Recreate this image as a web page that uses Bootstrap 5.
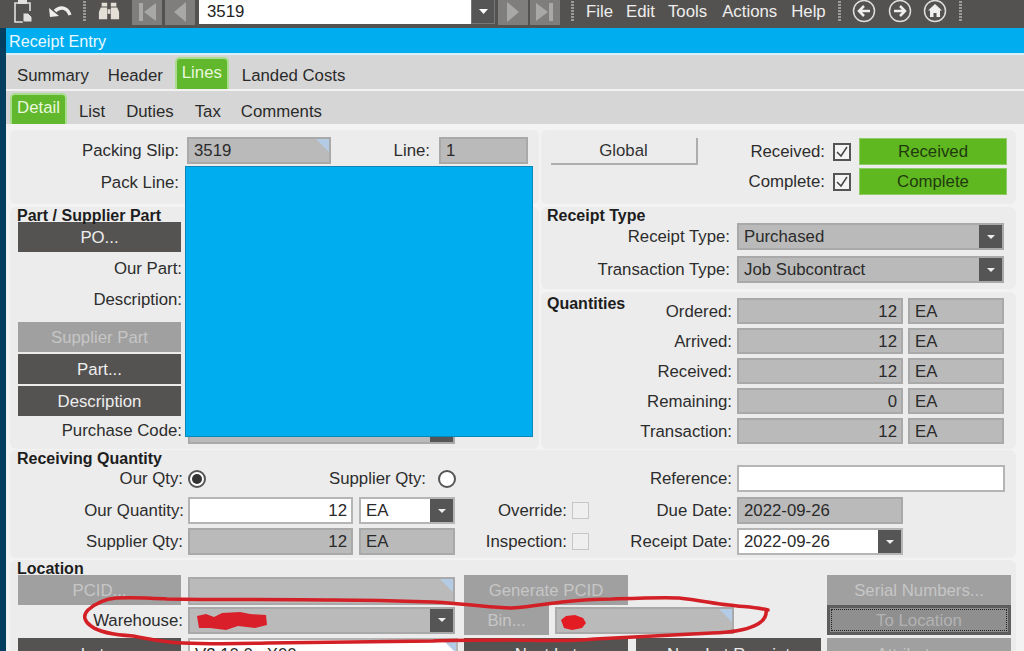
<!DOCTYPE html>
<html lang="en">
  <head>
    <meta charset="UTF-8" />
    <meta name="viewport" content="width=device-width, initial-scale=1.0" />
    <title>Receipt Entry</title>
    <link href="https://cdn.jsdelivr.net/npm/bootstrap@5.3.0/dist/css/bootstrap.min.css" rel="stylesheet" />
    <style>
      html, body { margin: 0; overflow: hidden; background: #f3f3f3; }
      .app { width: 1024px; height: 651px; overflow: hidden; position: relative; font: 16.8px/1.2 "Liberation Sans", Arial, sans-serif; color: #2a2a2a; background: #f3f3f3; }
      .edge { position: absolute; left: 0; top: 28px; bottom: 0; width: 6px; background: #053f5f; }
      /* toolbar */
      .tbar { height: 28px; background: #545250; color: #eee; overflow: hidden; }
      .tbar svg { display: block; flex: none; }
      .grip { width: 3px; height: 24px; margin-top: -2px; flex: none; background: repeating-linear-gradient(#9a9a98 0 2px, #545250 2px 3px); }
      .nav-sq { width: 30px; height: 26px; margin-top: -1px; flex: none; background: #7f7e7c; display: flex; align-items: center; justify-content: center; }
      .rec-box { width: 272px; height: 25px; margin-top: -1px; background: #fff; color: #222; padding-left: 8px; line-height: 25px; }
      .rec-drop { width: 24px; height: 25px; margin-top: -1px; background: #555; border: 1px solid #777; display: flex; align-items: center; justify-content: center; }
      .menu-it { line-height: 24px; }
      /* title and tabs */
      .title-bar { height: 25px; background: #00aeef; color: #eaf8ff; padding-left: 3px; font-size: 16.2px; line-height: 26px; margin-left: 6px; border-bottom: 2px solid #d7f0fa; box-sizing: content-box; }
      .tab-band { margin-left: 6px; background: #d6d6d6; display: flex; align-items: flex-end; border-bottom: 2px solid #f2f2f2; }
      .tab-a { height: 36px; }
      .tab-b { height: 35px; }
      .tab-lnk { color: #2a2a2a; }
      .tab-a .tab-lnk { line-height: 26px; }
      .tab-b .tab-lnk { line-height: 24px; }
      .tab-on { background: #62b82c; color: #eaf7df; border: 2px solid #a9dc8c; border-bottom: 0; border-radius: 5px 5px 0 0; text-align: center; }
      .tab-a .tab-on { width: 54px; height: 32px; line-height: 28px; }
      .tab-b .tab-on { width: 57px; height: 31px; line-height: 26px; margin-left: 4px; }
      /* panels */
      .panes { padding-left: 10px; padding-top: 4px; }
      .pane { background: #ececec; border-radius: 6px; }
      .col-l { width: 529px; }
      .col-r { width: 475px; margin-left: 2px; }
      .p-a { height: 74px; padding-top: 7px; }
      .p-b { height: 242px; margin-top: 3px; }
      .p-c { height: 82px; margin-top: 3px; }
      .p-d { height: 157px; margin-top: 3px; padding-top: 6px; }
      .p-e { width: 1006px; height: 108px; margin-top: 1px; }
      .p-f { width: 1006px; height: 100px; margin-top: 2px; }
      .sec-head { font-weight: 700; font-size: 16px; color: #1d1d1d; height: 15px; line-height: 17px; padding-left: 7px; white-space: nowrap; }
      .qty-head { width: 90px; padding-left: 6px; margin-top: -3px; flex: none; }
      .fr { display: flex; align-items: center; height: 27px; white-space: nowrap; }
      .lbl { flex: none; text-align: right; color: #2c2c2c; padding-top: 2px; }
      /* fields */
      .fld { flex: none; height: 27px; background: #bababa; border: 2px solid #a9a9a9; color: #2a2a2a; line-height: 24px; padding: 0 5px; position: relative; overflow: hidden; }
      .fld-w { background: #fff; border-color: #b5b5b5; }
      .fld-n { text-align: right; padding-right: 4px; }
      .fld-lot { width: 270px; height: 30px; margin-left: 7px; line-height: 29px; }
      .flag::after { content: ""; position: absolute; top: 0; right: 0; border-top: 13px solid #b4cbe6; border-left: 13px solid transparent; }
      .dd { position: absolute; top: 0; right: 0; bottom: 0; width: 23px; background: #555; display: flex; align-items: center; justify-content: center; }
      .dd::after { content: ""; border-top: 4px solid #eee; border-left: 4px solid transparent; border-right: 4px solid transparent; }
      .tile { flex: none; height: 30px; padding: 0; border: 0; border-radius: 0; font: inherit; line-height: 31px; text-align: center; }
      .tile-d { background: #555352; color: #eee; }
      .tile-g { background: #a0a0a0; color: #c6c6c6; }
      .tile-low { line-height: 33px; }
      .tile-f { background: #8f8f8f; color: #b3b3b3; border: 3px solid #5d5d5d; line-height: 23px; outline: 1px dotted #222; outline-offset: -5px; }
      .tile-s { background: #5fb81f; color: #1f3a10; height: 27px; line-height: 20px; border: 1px solid #8fcb67; margin-left: 8px; width: 148px; }
      .glob { width: 147px; height: 27px; line-height: 25px; text-align: center; border-right: 2px solid #adadad; border-bottom: 2px solid #adadad; margin-left: 10px; flex: none; color: #333; }
      .tick { width: 18px; height: 18px; flex: none; background: #f4f4f4; border: 2px solid #555; margin-left: 7px; display: block; }
      .tick-e { width: 17px; height: 17px; flex: none; background: #efefef; border: 1px solid #c6c6c6; margin-left: 5px; }
      .rad { width: 18px; height: 18px; border-radius: 50%; flex: none; border: 2px solid #555; background: #fff; position: relative; }
      .rad-on::after { content: ""; position: absolute; inset: 2px; border-radius: 50%; background: #333; }
      /* overlays */
      .mask { position: absolute; left: 185px; top: 166px; width: 348px; height: 271px; background: #00aeef; border: 1px solid #0b86b8; }
      .ink { position: absolute; left: 0; top: 0; pointer-events: none; }
      .w163 { width: 163px; } .w267 { width: 267px; } .w166 { width: 166px; } .w96 { width: 96px; }
      .w184 { width: 184px; } .w164 { width: 164px; }
    </style>
  </head>
  <body>
    <div class="app">
      <div class="tbar d-flex">
        <svg style="margin-left:14px" width="20" height="24" viewBox="0 0 20 24" fill="none" stroke="#e0e0e0" stroke-width="1.600"><path d="M4 3H1v19h8M13 3h3v8"/><path d="M4 -1h9v5H4z" fill="#e0e0e0" stroke="none"/><path d="M9 13h5l4 4v5H9z" fill="#e0e0e0" stroke="#545250" stroke-width="1"/></svg>
        <svg style="margin-left:14px" width="24" height="24" viewBox="0 0 24 24" fill="none"><path d="M7 11c5-5 12-4 15 4" stroke="#eee" stroke-width="3.400"/><path d="M1 8l1 9 9-1z" fill="#eee"/></svg>
        <div class="grip" style="margin-left:11px"></div>
        <svg style="margin-left:12px" width="22" height="24" viewBox="0 0 24 24" fill="#e4dfd7"><path d="M4 2h6v4H4zM14 2h6v4h-6z"/><path d="M3 7h7v13H1v-8zM14 7h7l2 5v8h-9z"/><path d="M10.500 9h3v5h-3z"/></svg>
        <div class="nav-sq" style="margin-left:12px"><svg width="22" height="20" viewBox="0 0 22 20" fill="#a8a8a6"><path d="M3 1h4v18H3zM20 1v18L8 10z"/></svg></div>
        <div class="nav-sq" style="margin-left:3px"><svg width="18" height="20" viewBox="0 0 18 20" fill="#a8a8a6"><path d="M15 0v20L3 10z"/></svg></div>
        <div class="rec-box" style="margin-left:4px">3519</div>
        <div class="rec-drop"><svg width="9" height="5" viewBox="0 0 9 5" fill="#fff"><path d="M0 0h9L4.500 5z"/></svg></div>
        <div class="nav-sq" style="margin-left:3px"><svg width="18" height="20" viewBox="0 0 18 20" fill="#a8a8a6"><path d="M3 0v20l12-10z"/></svg></div>
        <div class="nav-sq" style="margin-left:2px"><svg width="22" height="20" viewBox="0 0 22 20" fill="#a8a8a6"><path d="M2 1v18l12-9zM15 1h4v18h-4z"/></svg></div>
        <div class="grip" style="margin-left:11px"></div>
        <div class="menu-it" style="margin-left:12px">File</div>
        <div class="menu-it" style="margin-left:13px">Edit</div>
        <div class="menu-it" style="margin-left:13px">Tools</div>
        <div class="menu-it" style="margin-left:15px">Actions</div>
        <div class="menu-it" style="margin-left:14px">Help</div>
        <div class="grip" style="margin-left:12px"></div>
        <svg style="margin-left:11px;margin-top:-1px" width="24" height="24" viewBox="0 0 24 24" fill="none" stroke="#ddd"><circle cx="12" cy="12" r="10.500" stroke-width="1.500"/><path d="M18 12H7M12 7l-5 5 5 5" stroke="#eee" stroke-width="2.500"/></svg>
        <svg style="margin-left:12px;margin-top:-1px" width="24" height="24" viewBox="0 0 24 24" fill="none" stroke="#ddd"><circle cx="12" cy="12" r="10.500" stroke-width="1.500"/><path d="M6 12h11M12 7l5 5-5 5" stroke="#eee" stroke-width="2.500"/></svg>
        <svg style="margin-left:11px;margin-top:-1px" width="24" height="24" viewBox="0 0 24 24" fill="none" stroke="#ddd"><circle cx="12" cy="12" r="10.500" stroke-width="1.500"/><path d="M12 5l7 6.500h-2V18h-3.500v-4h-3v4H7v-6.500H5z" fill="#eee" stroke="none"/></svg>
        <div class="grip" style="margin-left:12px"></div>
      </div>

      <div class="edge"></div>
      <div class="title-bar">Receipt Entry</div>

      <div class="tab-band tab-a">
        <span class="tab-lnk" style="margin-left:11px">Summary</span>
        <span class="tab-lnk" style="margin-left:19px">Header</span>
        <span class="tab-on" style="margin-left:12px">Lines</span>
        <span class="tab-lnk" style="margin-left:13px">Landed Costs</span>
      </div>
      <div class="tab-band tab-b">
        <span class="tab-on">Detail</span>
        <span class="tab-lnk" style="margin-left:12px">List</span>
        <span class="tab-lnk" style="margin-left:21px">Duties</span>
        <span class="tab-lnk" style="margin-left:21px">Tax</span>
        <span class="tab-lnk" style="margin-left:20px">Comments</span>
      </div>

      <div class="panes">
        <div class="d-flex">
          <div class="col-l">
            <div class="pane p-a">
              <div class="fr">
                <div class="lbl" style="width:169px">Packing Slip:</div>
                <div class="fld flag ms-2" style="width:144px">3519</div>
                <div class="lbl" style="width:99px">Line:</div>
                <div class="fld" style="width:89px;margin-left:9px">1</div>
              </div>
              <div class="fr" style="margin-top:5px">
                <div class="lbl" style="width:169px">Pack Line:</div>
              </div>
            </div>
            <div class="pane p-b">
              <div class="sec-head">Part / Supplier Part</div>
              <button class="tile tile-d w163 ms-2 d-block" type="button">PO...</button>
              <div class="fr" style="margin-top:3px"><div class="lbl" style="width:172px">Our Part:</div></div>
              <div class="fr" style="margin-top:4px"><div class="lbl" style="width:172px">Description:</div></div>
              <button class="tile tile-g w163 ms-2 d-block" style="margin-top:9px" type="button">Supplier Part</button>
              <button class="tile tile-d w163 ms-2 d-block" style="margin-top:2px" type="button">Part...</button>
              <button class="tile tile-d w163 ms-2 d-block" style="margin-top:2px" type="button">Description</button>
              <div class="fr" style="margin-top:1px">
                <div class="lbl" style="width:172px">Purchase Code:</div>
                <div class="fld w267" style="margin-left:6px"><span class="dd"></span></div>
              </div>
            </div>
          </div>
          <div class="col-r">
            <div class="pane p-a" style="padding-top:8px">
              <div class="fr">
                <div class="glob">Global</div>
                <div class="lbl" style="width:127px">Received:</div>
                <svg class="tick" style="margin-left:8px" viewBox="0 0 14 14" fill="none" stroke="#444" stroke-width="1.500"><path d="M2 7l4 4 6-9"/></svg>
                <button class="tile tile-s" type="button">Received</button>
              </div>
              <div class="fr" style="margin-top:3px">
                <div class="lbl" style="width:284px">Complete:</div>
                <svg class="tick" style="margin-left:8px" viewBox="0 0 14 14" fill="none" stroke="#444" stroke-width="1.500"><path d="M2 7l4 4 6-9"/></svg>
                <button class="tile tile-s" type="button">Complete</button>
              </div>
            </div>
            <div class="pane p-c">
              <div class="sec-head" style="padding-left:6px">Receipt Type</div>
              <div class="fr" style="margin-top:1px">
                <div class="lbl" style="width:189px">Receipt Type:</div>
                <div class="fld w267" style="margin-left:7px">Purchased<span class="dd"></span></div>
              </div>
              <div class="fr" style="margin-top:6px">
                <div class="lbl" style="width:189px">Transaction Type:</div>
                <div class="fld w267" style="margin-left:7px">Job Subcontract<span class="dd"></span></div>
              </div>
            </div>
            <div class="pane p-d d-flex">
              <div class="sec-head qty-head">Quantities</div>
              <div>
                <div class="fr" style="height:26px"><div class="lbl" style="width:101px">Ordered:</div><div class="fld fld-n w166" style="height:26px;margin-left:5px">12</div><div class="fld w96" style="height:26px;margin-left:5px">EA</div></div>
                <div class="fr" style="height:26px;margin-top:4px"><div class="lbl" style="width:101px">Arrived:</div><div class="fld fld-n w166" style="height:26px;margin-left:5px">12</div><div class="fld w96" style="height:26px;margin-left:5px">EA</div></div>
                <div class="fr" style="height:26px;margin-top:4px"><div class="lbl" style="width:101px">Received:</div><div class="fld fld-n w166" style="height:26px;margin-left:5px">12</div><div class="fld w96" style="height:26px;margin-left:5px">EA</div></div>
                <div class="fr" style="height:26px;margin-top:4px"><div class="lbl" style="width:101px">Remaining:</div><div class="fld fld-n w166" style="height:26px;margin-left:5px">0</div><div class="fld w96" style="height:26px;margin-left:5px">EA</div></div>
                <div class="fr" style="height:26px;margin-top:4px"><div class="lbl" style="width:101px">Transaction:</div><div class="fld fld-n w166" style="height:26px;margin-left:5px">12</div><div class="fld w96" style="height:26px;margin-left:5px">EA</div></div>
              </div>
            </div>
          </div>
        </div>

        <div class="pane p-e">
          <div class="sec-head">Receiving Quantity</div>
          <div class="fr">
            <div class="lbl" style="width:173px">Our Qty:</div>
            <div class="rad rad-on" style="margin-left:5px"></div>
            <div class="lbl" style="width:220px">Supplier Qty:</div>
            <div class="rad" style="margin-left:12px"></div>
            <div class="lbl" style="width:276px">Reference:</div>
            <div class="fld fld-w" style="width:268px;margin-left:5px"></div>
          </div>
          <div class="fr" style="margin-top:5px">
            <div class="lbl" style="width:174px">Our Quantity:</div>
            <div class="fld fld-w fld-n" style="width:165px;margin-left:4px">12</div>
            <div class="fld fld-w" style="width:96px;margin-left:6px">EA<span class="dd"></span></div>
            <div class="lbl" style="width:112px">Override:</div>
            <div class="tick-e"></div>
            <div class="lbl" style="width:143px">Due Date:</div>
            <div class="fld w166" style="margin-left:5px">2022-09-26</div>
          </div>
          <div class="fr" style="margin-top:4px">
            <div class="lbl" style="width:173px">Supplier Qty:</div>
            <div class="fld fld-n" style="width:165px;margin-left:5px">12</div>
            <div class="fld" style="width:96px;margin-left:6px">EA</div>
            <div class="lbl" style="width:112px">Inspection:</div>
            <div class="tick-e"></div>
            <div class="lbl" style="width:143px">Receipt Date:</div>
            <div class="fld fld-w w166" style="margin-left:5px">2022-09-26<span class="dd"></span></div>
          </div>
        </div>

        <div class="pane p-f">
          <div class="sec-head">Location</div>
          <div class="fr" style="height:30px">
            <button class="tile tile-g w163 ms-2" type="button">PCID...</button>
            <div class="fld flag w267" style="height:28px;margin-left:7px;align-self:flex-end"></div>
            <button class="tile tile-g w164" style="margin-left:9px" type="button">Generate PCID</button>
            <button class="tile tile-g w184" style="margin-left:199px" type="button">Serial Numbers...</button>
          </div>
          <div class="fr" style="height:30px">
            <div class="lbl" style="width:173px">Warehouse:</div>
            <div class="fld w267" style="margin-left:5px"><span class="dd"></span></div>
            <button class="tile tile-g" style="width:85px;margin-left:9px" type="button">Bin...</button>
            <div class="fld flag" style="width:179px;margin-left:6px"></div>
            <button class="tile tile-f w184" style="margin-left:93px" type="button">To Location</button>
          </div>
          <div class="fr" style="height:30px;margin-top:3px;align-items:flex-start">
            <button class="tile tile-d tile-low w163 ms-2" type="button">Lot...</button>
            <div class="fld fld-w fld-lot flag">V2.10.0...X00</div>
            <button class="tile tile-d tile-low w164" style="margin-left:6px" type="button">Next Lot</button>
            <button class="tile tile-d tile-low" style="width:185px;margin-left:8px" type="button">New Lot Receipt</button>
            <button class="tile tile-g tile-low w184" style="margin-left:6px" type="button">Attributes...</button>
          </div>
        </div>
      </div>

      <div class="mask"></div>
      <svg class="ink" width="1024" height="651" viewBox="0 0 1024 651" fill="none">
        <path d="M766 610C768 622 752 632 712 633C690 634 660 636 595 639C560 642 530 640 512 640C480 640 450 640 433 641C380 642 320 642 267 643C235 644 205 644 183 643C160 642 145 638 133 636C115 635 100 633 91 626C85 622 82 616 88 610C96 603 105 599 116 598C135 597 150 598 167 599C220 600 280 599 333 600C370 600 405 601 433 602C470 604 495 608 512 608C530 607 545 604 562 602C580 600 595 599 612 599C640 598 665 597 679 598C700 600 715 604 729 605C745 607 755 607 768 610" stroke="#d31f26" stroke-width="3.500" stroke-linecap="round"/>
        <path d="M197 616L206 614L214 617L222 613L240 612L250 614L266 615L267 625L255 628L238 626L226 630L210 628L199 628Z" fill="#d9202a"/>
        <path d="M561 620L566 616L575 615L583 618L586 623L582 628L572 630L564 628Z" fill="#e31c23"/>
      </svg>
    </div>
    <script src="https://cdn.jsdelivr.net/npm/bootstrap@5.3.0/dist/js/bootstrap.bundle.min.js"></script>
  </body>
</html>
